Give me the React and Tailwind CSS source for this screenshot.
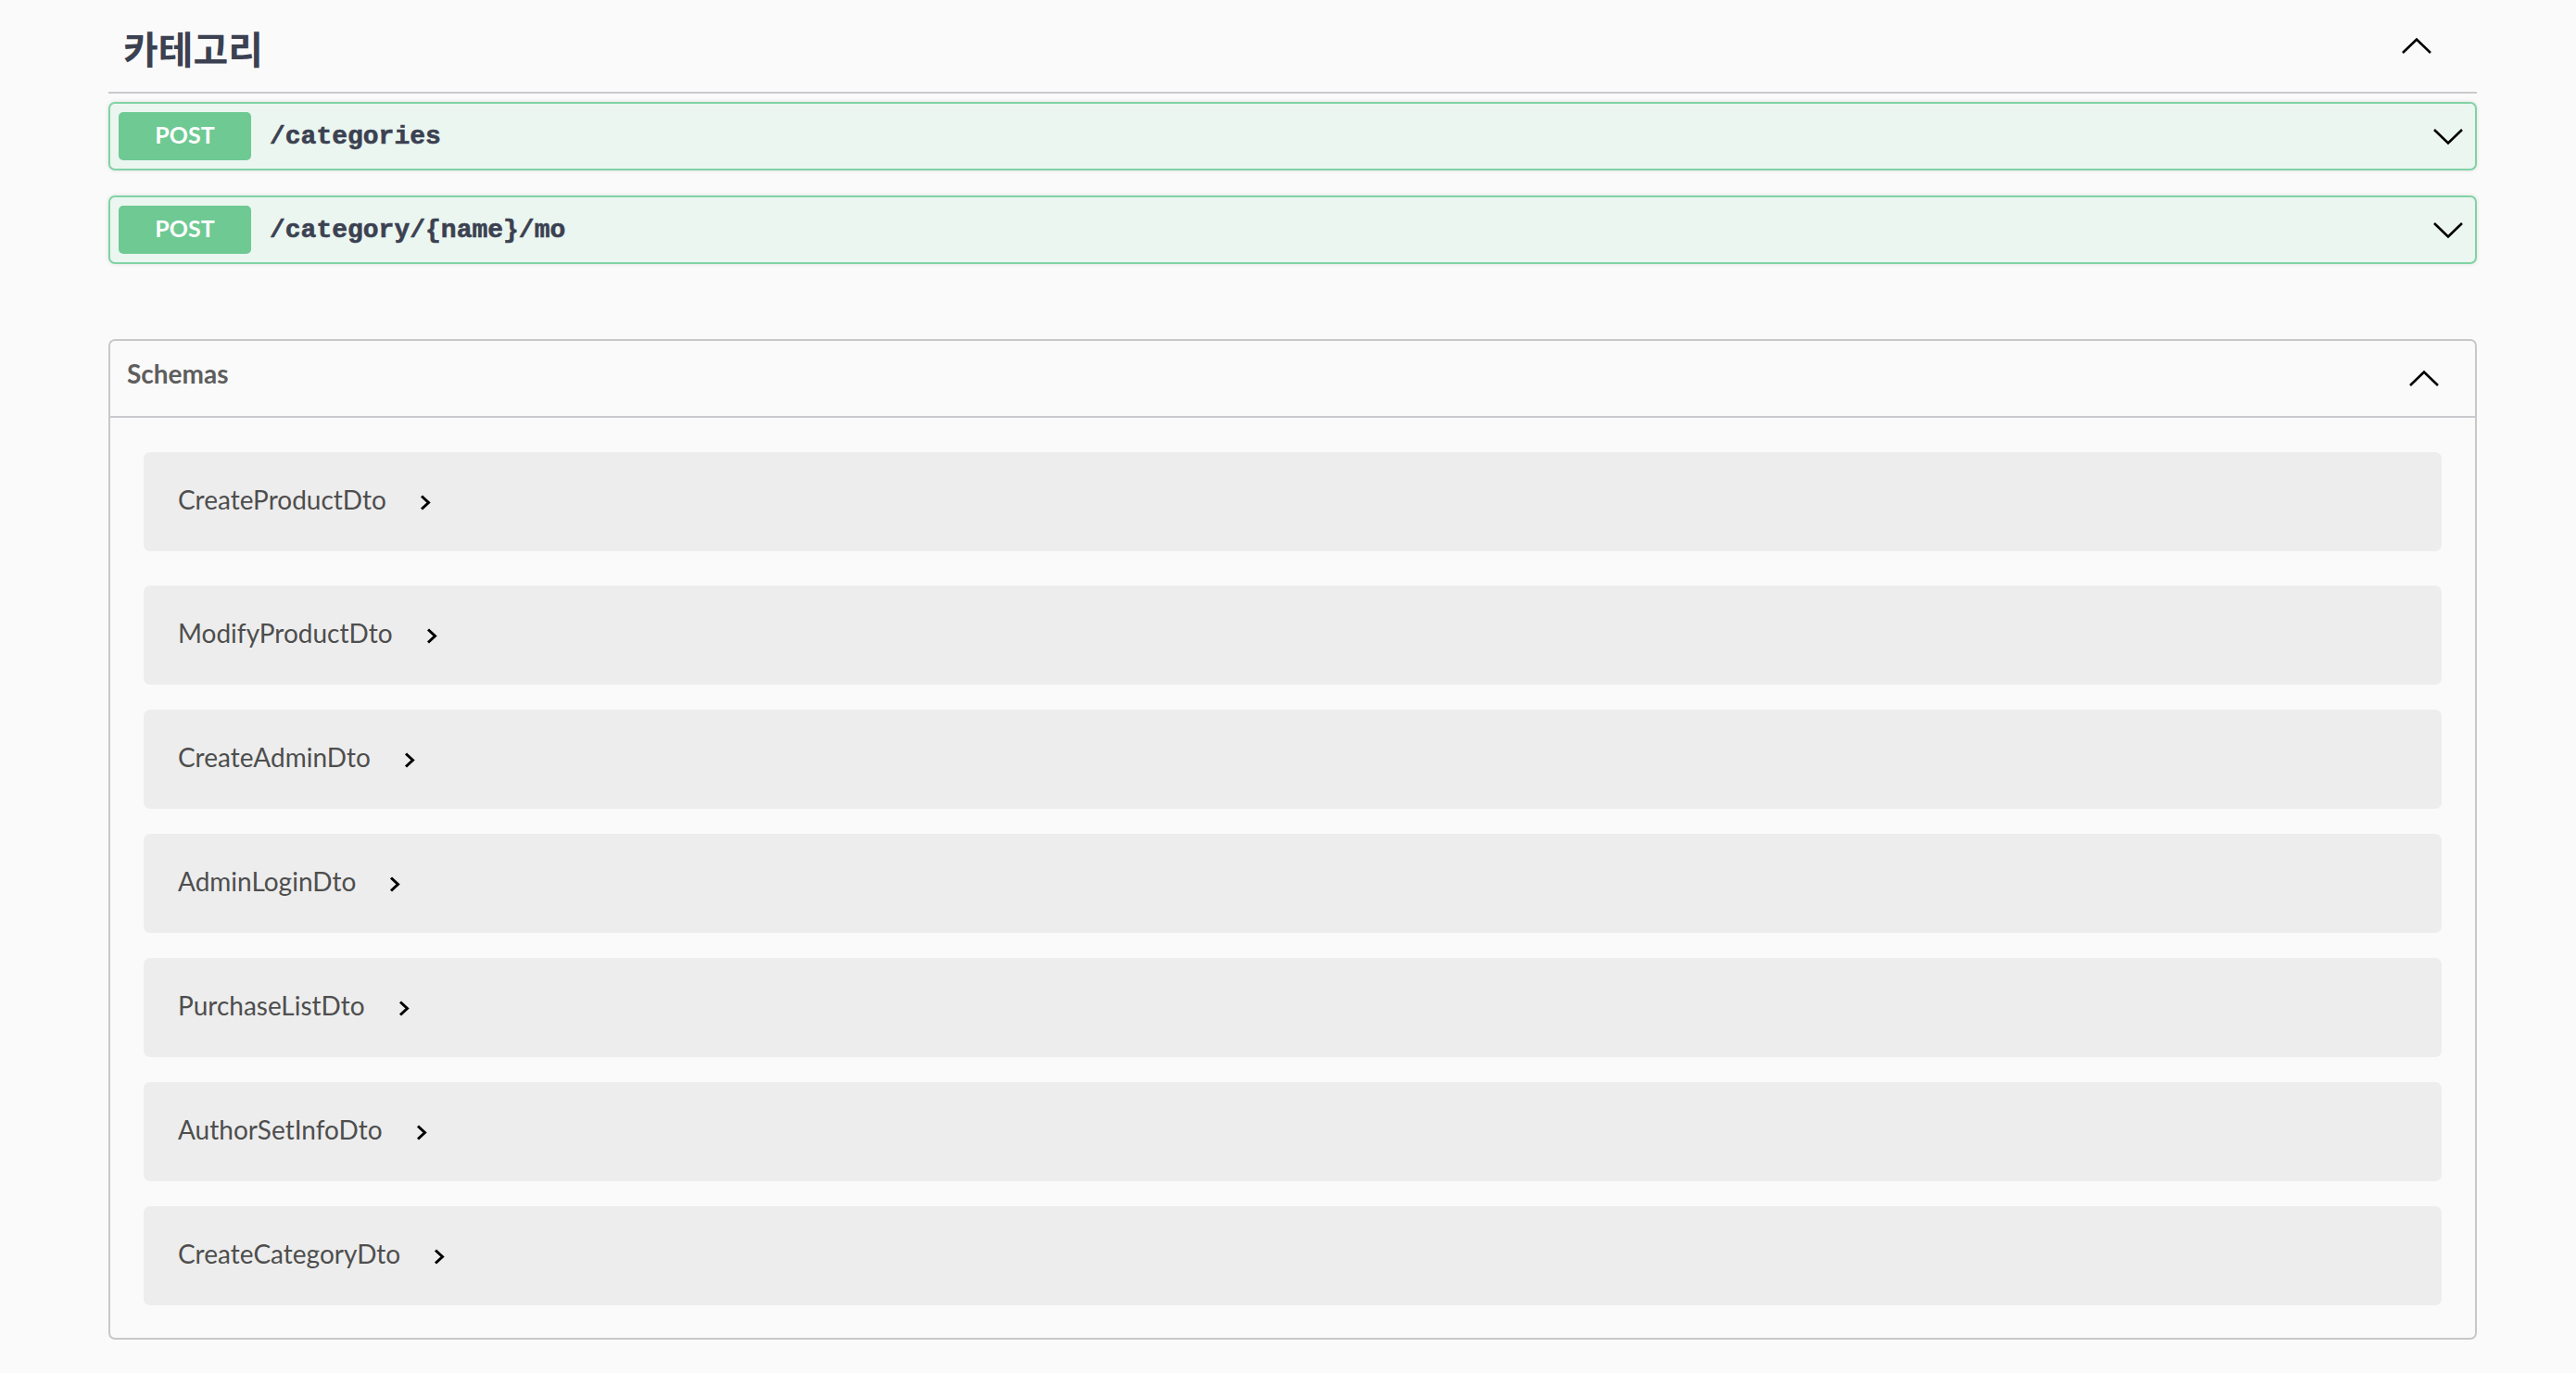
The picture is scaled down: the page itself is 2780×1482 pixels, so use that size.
import React from "react";

function ChevronUp({ className = "" }) {
  return (
    <svg className={className} width="34" height="19" viewBox="0 0 34 19" fill="none">
      <polyline points="2,17 17,2.5 32,17" stroke="#000" strokeWidth="2.6" strokeLinecap="butt" strokeLinejoin="miter" />
    </svg>
  );
}

function ChevronDown({ className = "" }) {
  return (
    <svg className={className} width="34" height="19" viewBox="0 0 34 19" fill="none">
      <polyline points="2,2 17,16.5 32,2" stroke="#000" strokeWidth="2.6" strokeLinecap="butt" strokeLinejoin="miter" />
    </svg>
  );
}

function ChevronRight() {
  return (
    <svg width="14" height="19" viewBox="0 0 14 19" fill="none">
      <polyline points="3,2.5 10.5,9.5 3,16.5" stroke="#000" strokeWidth="3" strokeLinecap="butt" strokeLinejoin="miter" />
    </svg>
  );
}

function Op({ path, className = "" }) {
  return (
    <div
      className={
        "flex h-[74px] items-center rounded-[7px] border-2 border-[#80d3a4] bg-[#ebf6f0] pl-[9px] pr-[12px] shadow-[0_0_4px_rgba(0,0,0,0.12)] " +
        className
      }
    >
      <div className="flex h-[52px] w-[143px] items-center justify-center rounded-[5px] bg-[#6ec993] pb-[2px] text-[25px] font-bold text-white [font-family:Lato,'Noto_Sans',sans-serif]">
        POST
      </div>
      <div className="ml-[20px] flex-1 pt-[2px] text-[28px] font-bold text-[#3b4151] [font-family:'Liberation_Mono','Courier_New',monospace] [-webkit-text-stroke:0.6px_#3b4151]">
        {path}
      </div>
      <ChevronDown />
    </div>
  );
}

const schemas = [
  "CreateProductDto",
  "ModifyProductDto",
  "CreateAdminDto",
  "AdminLoginDto",
  "PurchaseListDto",
  "AuthorSetInfoDto",
  "CreateCategoryDto",
];

export default function App() {
  return (
    <div className="min-h-[1482px] w-[2780px] bg-[#fafafa] [font-family:Lato,'Noto_Sans',sans-serif]">
      <div className="ml-[117px] w-[2556px]">
        {/* Tag heading */}
        <div className="flex h-[101px] items-center justify-between border-b-2 border-[#c9cacd] pl-[16px] pr-[48px]">
          <h3 className="pt-[4px] text-[41px] font-bold text-[#3b4151] [font-family:'Noto_Sans_CJK_KR','Noto_Sans',sans-serif]">
            카테고리
          </h3>
          <ChevronUp />
        </div>

        <Op path="/categories" className="mt-[9px]" />
        <Op path="/category/{name}/mo" className="mt-[27px]" />

        {/* Schemas */}
        <section className="mt-[81px] rounded-[7px] border-2 border-[#c8c8c8]">
          <div className="flex h-[83px] items-center justify-between border-b-2 border-[#c9cacd] pl-[18px] pr-[38px]">
            <h4 className="mb-[12px] text-[28px] font-bold text-[#5e5e5e]">Schemas</h4>
            <ChevronUp />
          </div>
          <div className="px-[36px] pb-[35px] pt-[37px]">
            {schemas.map((name, i) => (
              <div
                key={name}
                className={
                  "flex h-[107px] items-center rounded-[7px] bg-[#ededed] pl-[37px] " +
                  (i === 0 ? "mb-[37px]" : i === schemas.length - 1 ? "" : "mb-[27px]")
                }
              >
                <span className="mb-[5px] text-[28px] text-[#4e4e4e]">{name}</span>
                <span className="ml-[35px] mt-[2px] flex items-center">
                  <ChevronRight />
                </span>
              </div>
            ))}
          </div>
        </section>
      </div>
    </div>
  );
}
